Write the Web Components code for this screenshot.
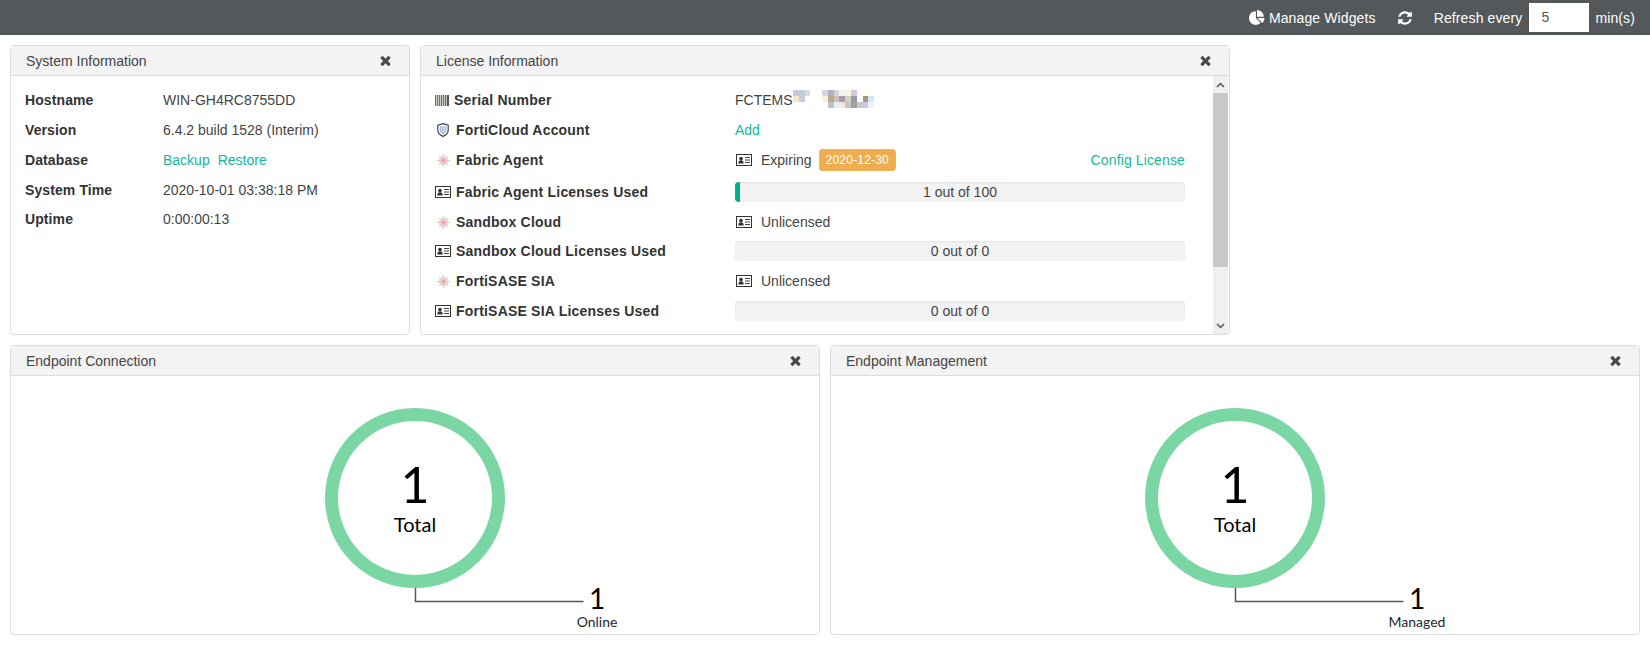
<!DOCTYPE html>
<html>
<head>
<meta charset="utf-8">
<title>Dashboard</title>
<style>
  html, body { margin: 0; padding: 0; background: #fff; }
  body { font: 14px "Liberation Sans", Arial, sans-serif; color: #333; }
  a { color: #14b89a; text-decoration: none; }
</style>
</head>
<body>

<top-bar></top-bar>

<dash-board>
  <widget-panel title="System Information" style="width:400px">
    <info-list style="--label-w:138px;--pad:14px">
      <info-row label="Hostname" style="height:30px">WIN-GH4RC8755DD</info-row>
      <info-row label="Version" style="height:30px">6.4.2 build 1528 (Interim)</info-row>
      <info-row label="Database" style="height:30px"><green-link>Backup</green-link><green-link style="margin-left:8px">Restore</green-link></info-row>
      <info-row label="System Time" style="height:29px">2020-10-01 03:38:18 PM</info-row>
      <info-row label="Uptime" style="height:30px">0:00:00:13</info-row>
    </info-list>
  </widget-panel>

  <widget-panel title="License Information" style="width:810px" scroll>
    <info-list style="--label-w:300px;--pad:14px;--label-sp:.2px">
      <info-row label="Serial Number" style="height:30px" icon="barcode">FCTEMS<blur-mosaic></blur-mosaic></info-row>
      <info-row label="FortiCloud Account" style="height:30px" icon="shield"><green-link>Add</green-link></info-row>
      <info-row label="Fabric Agent" style="height:30px" icon="fabric">
        <status-cell>Expiring<date-badge>2020-12-30</date-badge><green-link slot="end" style="letter-spacing:.13px">Config License</green-link></status-cell>
      </info-row>
      <info-row label="Fabric Agent Licenses Used" style="height:33px" icon="card"><usage-bar used="1" total="100"></usage-bar></info-row>
      <info-row label="Sandbox Cloud" style="height:28px" icon="fabric"><status-cell>Unlicensed</status-cell></info-row>
      <info-row label="Sandbox Cloud Licenses Used" style="height:30px" icon="card"><usage-bar used="0" total="0"></usage-bar></info-row>
      <info-row label="FortiSASE SIA" style="height:30px" icon="fabric"><status-cell>Unlicensed</status-cell></info-row>
      <info-row label="FortiSASE SIA Licenses Used" style="height:30px" icon="card"><usage-bar used="0" total="0"></usage-bar></info-row>
    </info-list>
  </widget-panel>

  <widget-panel title="Endpoint Connection" style="width:810px">
    <donut-chart total="1" value="1" name="Online"></donut-chart>
  </widget-panel>

  <widget-panel title="Endpoint Management" style="width:810px">
    <donut-chart total="1" value="1" name="Managed"></donut-chart>
  </widget-panel>
</dash-board>

<script>
const barcodeStripes = ['#6f6f6f', '#d2c8bc', '#6e7c8c', '#ccd2c4', '#7c6c7a', '#d4c8d0', '#64746c', '#c8c8d8', '#7c6c6c', '#d8d0c0', '#5c6c7c', '#c0c8c0', '#555', '#555']
  .map((c, i) => `<rect x="${i}" width="1" height="11" fill="${c}"/>`).join('')

const ICONS = {
  pie: '<svg width="16" height="16" viewBox="0 0 1792 1792" fill="#fff"><path d="M768 890l546 546q-106 108-247.5 168t-298.5 60q-209 0-385.5-103t-279.5-279.5-103-385.5 103-385.5 279.5-279.5 385.5-103v762zm187 6h773q0 157-60 298.5t-168 247.5zm709-128h-768v-768q209 0 385.5 103t279.5 279.5 103 385.5z"/></svg>',
  sync: '<svg width="16" height="16" viewBox="0 0 1792 1792" fill="#fff"><path d="M1639 1056q0 5-1 7-64 268-268 434.5t-478 166.5q-146 0-282.5-55t-243.5-157l-129 129q-19 19-45 19t-45-19-19-45v-448q0-26 19-45t45-19h448q26 0 45 19t19 45-19 45l-137 137q71 66 161 102t187 36q134 0 250-65t186-179q11-17 53-117 8-23 30-23h192q13 0 22.5 9.5t9.5 22.5zm25-800v448q0 26-19 45t-45 19h-448q-26 0-45-19t-19-45 19-45l138-138q-148-137-349-137-134 0-250 65t-186 179q-11 17-53 117-8 23-30 23h-199q-13 0-22.5-9.5t-9.5-22.5v-7q65-268 270-434.5t480-166.5q146 0 284 55.5t245 156.5l130-129q19-19 45-19t45 19 19 45z"/></svg>',
  times: '<svg width="15" height="15" viewBox="0 0 1792 1792" fill="#4a4a4a"><path d="M1490 1322q0 40-28 68l-136 136q-28 28-68 28t-68-28l-294-294-294 294q-28 28-68 28t-68-28l-136-136q-28-28-28-68t28-68l294-294-294-294q-28-28-28-68t28-68l136-136q28-28 68-28t68 28l294 294 294-294q28-28 68-28t68 28l136 136q28 28 28 68t-28 68l-294 294 294 294q28 28 28 68z"/></svg>',
  card: '<svg width="16" height="12" viewBox="0 0 16 12"><rect x=".5" y=".5" width="15" height="11" fill="#fff" stroke="#333"/><circle cx="5" cy="4.600" r="1.800" fill="#333"/><path d="M2.300 9.500q0-3.200 2.700-3.200t2.700 3.200z" fill="#333"/><path d="M9 3.500h5M9 6h5M9 8.500h5" stroke="#444"/></svg>',
  barcode: `<svg width="14" height="11" viewBox="0 0 14 11" shape-rendering="crispEdges">${barcodeStripes}</svg>`,
  shield: '<svg width="12" height="14" viewBox="0 0 12 14"><path d="M6 .6l5.200 1.600v5c0 3-2.300 5-5.200 6.200C3.100 12.200.8 10.200.8 7.200v-5z" fill="#fff" stroke="#444" stroke-width="1.200"/><path d="M2.800 3.300h6.400v5.200q-.8 1.800-3.200 2.900-2.400-1.100-3.200-2.900z" fill="#7ea6e2"/><path d="M4.500 3v8M6 3v9M7.500 3v8M2.500 5h7M2.500 7h7M2.500 9h7" stroke="#fff" stroke-width=".5"/></svg>',
  fabric: '<svg width="13" height="13" viewBox="0 0 13 13"><circle cx="6.500" cy="6.500" r="5" fill="#e6e0e0"/><g stroke="#cfcfcf" stroke-width="1" fill="none"><path d="M6.500 0v13M0 6.500h13M2 2l9 9M11 2l-9 9"/></g><path d="M6.500 2.600L10.400 6.500 6.500 10.400 2.600 6.500z" fill="#f4c4c6"/><circle cx="6.500" cy="6.500" r="1.700" fill="#eea6a9"/></svg>'
}

class TopBar extends HTMLElement {
  constructor () {
    super()
    this.attachShadow({ mode: 'open' }).innerHTML = `
      <style>
        :host { display: flex; align-items: center; justify-content: flex-end; height: 35px; background: #54585a; color: #fff; padding-right: 15px; box-sizing: border-box; letter-spacing: .12px; }
        .item { display: flex; align-items: center; }
        svg { display: block; }
        .manage svg { margin-right: 4px; }
        .sync { margin: 0 21px 0 21px; }
        .box { width: 60px; height: 29px; background: #fff; color: #555; margin: 0 6px 0 7px; padding-left: 12px; box-sizing: border-box; line-height: 29px; }
      </style>
      <div class="item manage">${ICONS.pie}<span>Manage Widgets</span></div>
      <div class="item sync">${ICONS.sync}</div>
      <div class="item">Refresh every<div class="box">5</div>min(s)</div>`
  }
}

class DashBoard extends HTMLElement {
  constructor () {
    super()
    this.attachShadow({ mode: 'open' }).innerHTML = `
      <style>
        :host { display: flex; flex-wrap: wrap; gap: 10px; padding: 10px; width: 1650px; box-sizing: border-box; }
      </style>
      <slot></slot>`
  }
}

class WidgetPanel extends HTMLElement {
  constructor () {
    super()
    this.attachShadow({ mode: 'open' })
  }

  connectedCallback () {
    const scroll = this.hasAttribute('scroll') ? '<scroll-track></scroll-track>' : ''
    this.shadowRoot.innerHTML = `
      <style>
        :host { display: flex; flex-direction: column; height: 290px; box-sizing: border-box; border: 1px solid #ddd; border-radius: 4px; background: #fff; overflow: hidden; }
        .head { display: flex; align-items: center; justify-content: space-between; height: 30px; flex: none; box-sizing: border-box; background: #f3f3f3; border-bottom: 1px solid #ddd; padding: 0 16px 0 15px; color: #444; }
        .head svg { display: block; }
        .body { display: flex; flex: 1; min-height: 0; }
        .content { flex: 1; min-width: 0; }
      </style>
      <div class="head"><span>${this.getAttribute('title')}</span>${ICONS.times}</div>
      <div class="body"><div class="content"><slot></slot></div>${scroll}</div>`
  }
}

class ScrollTrack extends HTMLElement {
  constructor () {
    super()
    this.attachShadow({ mode: 'open' }).innerHTML = `
      <style>
        :host { display: flex; flex-direction: column; flex: none; width: 15px; margin-right: 1px; background: #f0f0f0; }
        .arrow { height: 17px; flex: none; display: flex; align-items: center; justify-content: center; }
        .thumb { height: 174px; flex: none; background: #c8c8c8; }
        .rest { flex: 1; }
        svg { display: block; }
      </style>
      <div class="arrow"><svg width="9" height="6" viewBox="0 0 9 6"><path d="M1 5l3.500-3.500L8 5" fill="none" stroke="#555" stroke-width="1.500"/></svg></div>
      <div class="thumb"></div>
      <div class="rest"></div>
      <div class="arrow"><svg width="9" height="6" viewBox="0 0 9 6"><path d="M1 1l3.500 3.500L8 1" fill="none" stroke="#555" stroke-width="1.500"/></svg></div>`
  }
}

class InfoList extends HTMLElement {
  constructor () {
    super()
    this.attachShadow({ mode: 'open' }).innerHTML = `
      <style>
        :host { display: block; padding: 9px 28px 0 var(--pad, 15px); }
      </style>
      <slot></slot>`
  }
}

class InfoRow extends HTMLElement {
  constructor () {
    super()
    this.attachShadow({ mode: 'open' })
  }

  connectedCallback () {
    const icon = this.getAttribute('icon')
    const iconHtml = icon ? `<span class="icon ${icon}">${ICONS[icon]}</span>` : ''
    this.shadowRoot.innerHTML = `
      <style>
        :host { display: flex; align-items: center; box-sizing: border-box; }
        .label { display: flex; align-items: center; width: var(--label-w); flex: none; font-weight: bold; color: #333; letter-spacing: var(--label-sp, .1px); }
        .icon { display: flex; justify-content: center; flex: none; width: 16px; margin-right: 5px; }
        .icon.barcode { justify-content: flex-start; margin-right: 3px; }
        .value { flex: 1; min-width: 0; color: #444; display: flex; align-items: center; }
        svg { display: block; }
      </style>
      <div class="label">${iconHtml}<span>${this.getAttribute('label')}</span></div>
      <div class="value"><slot></slot></div>`
  }
}

class GreenLink extends HTMLElement {
  constructor () {
    super()
    this.attachShadow({ mode: 'open' }).innerHTML = `
      <style>:host { display: inline; color: #14b89a; cursor: pointer; }</style>
      <slot></slot>`
  }
}

class BlurMosaic extends HTMLElement {
  constructor () {
    super()
    const rows = [
      [[0, '#c8c8dc'], [1, '#c0d0d0'], [2, '#dcdcdc'], [5, '#d8d8d8'], [6, '#b0b0c8'], [7, '#d4d4dc'], [8, '#eef6ea'], [9, '#f8f4e4'], [10, '#d8c8d8'], [12, '#fffff0']],
      [[0, '#f4e8c8'], [1, '#c8c8e0'], [5, '#f8f0e0'], [6, '#c0a890'], [7, '#d0c0b0'], [8, '#a898b0'], [9, '#d8d0b8'], [10, '#9898a8'], [12, '#a89880'], [13, '#d0e8f8']],
      [[6, '#c8c0b8'], [7, '#e0f0f8'], [8, '#f8e8d8'], [9, '#c0c8c8'], [10, '#a0a0a0'], [11, '#c8c8c8'], [12, '#d0c8e0'], [13, '#f0f4f8']]
    ]
    const rects = rows.map((row, y) => row.map(([x, c]) =>
      `<rect x="${x * 5.8}" y="${y * 6}" width="5.8" height="6" fill="${c}"/>`).join('')).join('')
    this.attachShadow({ mode: 'open' }).innerHTML = `
      <style>
        :host { display: block; width: 82px; height: 18px; margin-top: -2px; }
        svg { display: block; }
      </style>
      <svg width="82" height="18" shape-rendering="crispEdges">${rects}</svg>`
  }
}

class StatusCell extends HTMLElement {
  constructor () {
    super()
    this.attachShadow({ mode: 'open' }).innerHTML = `
      <style>
        :host { display: flex; align-items: center; flex: 1; }
        svg { display: block; margin: 0 9px 0 1px; flex: none; }
        .end { margin-left: auto; }
      </style>
      ${ICONS.card}<slot></slot><span class="end"><slot name="end"></slot></span>`
  }
}

class DateBadge extends HTMLElement {
  constructor () {
    super()
    this.attachShadow({ mode: 'open' }).innerHTML = `
      <style>
        :host { display: block; margin-left: 7px; height: 22px; line-height: 21px; box-sizing: border-box; padding: 0 6px; background: #efad4d; border: 1px solid #f0b55f; border-radius: 3px; color: #fff; font-size: 12px; letter-spacing: .2px; }
      </style>
      <slot></slot>`
  }
}

class UsageBar extends HTMLElement {
  constructor () {
    super()
    this.attachShadow({ mode: 'open' })
  }

  connectedCallback () {
    const used = Number(this.getAttribute('used'))
    const total = Number(this.getAttribute('total'))
    const pct = total ? used / total * 100 : 0
    this.shadowRoot.innerHTML = `
      <style>
        :host { display: block; flex: 1; height: 20px; }
        .track { position: relative; height: 20px; line-height: 20px; text-align: center; background: #f3f3f3; border-radius: 4px; box-shadow: inset 0 1px 2px rgba(0,0,0,.08); overflow: hidden; color: #444; }
        .fill { position: absolute; left: 0; top: 0; bottom: 0; width: ${pct}%; background: #00b08a; }
        .text { position: relative; }
      </style>
      <div class="track"><div class="fill"></div><div class="text">${used} out of ${total}</div></div>`
  }
}

class DonutChart extends HTMLElement {
  constructor () {
    super()
    this.attachShadow({ mode: 'open' })
  }

  connectedCallback () {
    const total = this.getAttribute('total')
    const value = this.getAttribute('value')
    const name = this.getAttribute('name')
    this.shadowRoot.innerHTML = `
      <style>
        :host { display: flex; justify-content: center; font-family: Lato, sans-serif; }
        svg { display: block; }
        text { text-anchor: middle; fill: #000; }
        .name { fill: #1c2833; }
      </style>
      <svg width="808" height="258" viewBox="0 0 808 258">
        <circle cx="404" cy="122" r="83.500" fill="none" stroke="#7ad6a3" stroke-width="13"/>
        <path d="M404.500 212v13.500H572.500" fill="none" stroke="#555" stroke-width="1.500"/>
        <text x="404" y="127" font-size="50">${total}</text>
        <text x="404" y="156" font-size="20">Total</text>
        <text x="586" y="233" font-size="28">${value}</text>
        <text class="name" x="586" y="251" font-size="14">${name}</text>
      </svg>`
  }
}

customElements.define('top-bar', TopBar)
customElements.define('dash-board', DashBoard)
customElements.define('widget-panel', WidgetPanel)
customElements.define('scroll-track', ScrollTrack)
customElements.define('info-list', InfoList)
customElements.define('info-row', InfoRow)
customElements.define('green-link', GreenLink)
customElements.define('blur-mosaic', BlurMosaic)
customElements.define('status-cell', StatusCell)
customElements.define('date-badge', DateBadge)
customElements.define('usage-bar', UsageBar)
customElements.define('donut-chart', DonutChart)
</script>
</body>
</html>
